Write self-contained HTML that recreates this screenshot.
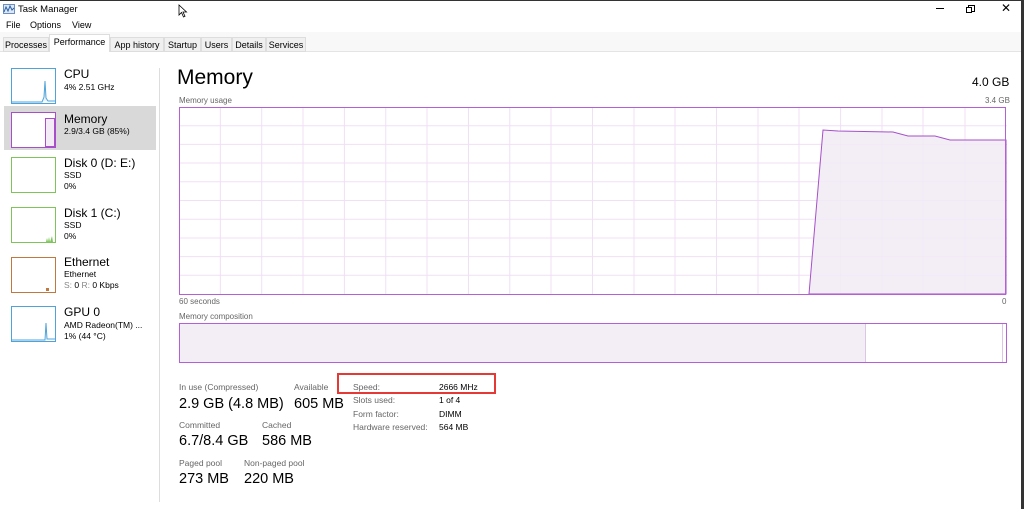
<!DOCTYPE html>
<html><head><meta charset="utf-8"><style>
*{margin:0;padding:0;box-sizing:border-box}
body{width:1024px;height:509px;background:#fff;font-family:"Liberation Sans",sans-serif;position:relative;overflow:hidden;color:#000}
.a{position:absolute;white-space:nowrap}
.tab{position:absolute;top:37px;height:15px;font-size:9px;padding-top:2px;text-align:center;background:#f0f0f0;border:1px solid #ddd;color:#000}
.box{position:absolute;left:11px;width:45px;height:36px;background:#fff}
.nm{position:absolute;left:64px;font-size:12px}
.sb{position:absolute;left:64px;font-size:8.5px;line-height:11px}
.lbl{font-size:8.5px;color:#666}
.big{font-size:14.5px}
</style></head><body>
<div class="a" style="left:0;top:0;width:1024px;height:1px;background:#333"></div>
<div class="a" style="left:1021px;top:0;width:3px;height:509px;background:#333"></div>
<svg class="a" style="left:3px;top:4px" width="12" height="10"><rect x="0.5" y="0.5" width="11" height="9" fill="#dde8f4" stroke="#6a8fc0"/><path d="M1 8 L3 3 L5 7 L7 2 L9 6 L11 4" stroke="#2a5fa8" fill="none"/></svg>
<div class="a" style="left:18px;top:4px;font-size:9.5px">Task Manager</div>
<svg class="a" style="left:178px;top:4px" width="10" height="14"><path d="M1 1 L1 11 L3.5 8.5 L5.5 13 L7 12.3 L5 8 L8.5 8 Z" fill="#fff" stroke="#000" stroke-width="0.8"/></svg>
<div class="a" style="left:936px;top:8px;width:8px;height:1px;background:#000"></div>
<div class="a" style="left:968px;top:5px;width:7px;height:7px;border:1px solid #000"></div>
<div class="a" style="left:966px;top:7px;width:6px;height:6px;border:1px solid #000;background:#fff"></div>
<div class="a" style="left:1001px;top:1px;font-size:12px">✕</div>
<div class="a" style="left:6px;top:20px;font-size:9px">File</div>
<div class="a" style="left:30px;top:20px;font-size:9px">Options</div>
<div class="a" style="left:72px;top:20px;font-size:9px">View</div>
<div class="a" style="left:0;top:32px;width:1021px;height:20px;background:#f8f8f8;border-bottom:1px solid #e4e4e4"></div>
<div class="tab" style="left:3px;width:46px">Processes</div>
<div class="tab" style="left:49px;top:34px;height:18px;width:61px;background:#fff;border-bottom:none">Performance</div>
<div class="tab" style="left:110px;width:54px">App history</div>
<div class="tab" style="left:164px;width:37px">Startup</div>
<div class="tab" style="left:201px;width:31px">Users</div>
<div class="tab" style="left:232px;width:34px">Details</div>
<div class="tab" style="left:266px;width:40px">Services</div>

<div class="a" style="left:159px;top:68px;width:1px;height:434px;background:#ddd"></div>
<div class="a" style="left:4px;top:106px;width:152px;height:44px;background:#d9d9d9"></div>

<div class="box" style="top:68px;border:1px solid #4fa3d8"><svg width="43" height="34"><path d="M0 33 L30 33 L32 28 L33 12 L34 29 L36 32 L43 32" stroke="#4fa3d8" fill="#e8f3fb"/></svg></div>
<div class="nm" style="top:67px">CPU</div><div class="sb" style="top:82px">4% 2.51 GHz</div>

<div class="box" style="top:112px;border:1px solid #a64fc9"><div style="position:absolute;left:33px;top:5px;width:10px;height:29px;border:1px solid #a64fc9;background:#f3ecf6"></div></div>
<div class="nm" style="top:112px">Memory</div><div class="sb" style="top:126px">2.9/3.4 GB (85%)</div>

<div class="box" style="top:157px;border:1px solid #7dc55a"></div>
<div class="nm" style="top:156px">Disk 0 (D: E:)</div><div class="sb" style="top:170px">SSD<br>0%</div>

<div class="box" style="top:207px;border:1px solid #7dc55a"><svg width="43" height="34"><path d="M34 34 L35 30 L36 34 L37 29 L38 34 L40 28 L41 34Z" fill="#7dc55a"/></svg></div>
<div class="nm" style="top:206px">Disk 1 (C:)</div><div class="sb" style="top:220px">SSD<br>0%</div>

<div class="box" style="top:257px;border:1px solid #c07840"><div style="position:absolute;left:34px;top:30px;width:3px;height:3px;background:#c07840"></div></div>
<div class="nm" style="top:255px">Ethernet</div><div class="sb" style="top:269px">Ethernet<br><span style="color:#888">S:</span> 0 <span style="color:#888">R:</span> 0 Kbps</div>

<div class="box" style="top:306px;border:1px solid #4fa3d8"><svg width="43" height="34"><path d="M0 33 L33 33 L34 16 L35 32 L43 32" stroke="#4fa3d8" fill="none"/></svg></div>
<div class="nm" style="top:305px">GPU 0</div><div class="sb" style="top:320px">AMD Radeon(TM) ...<br>1% (44 °C)</div>

<div class="a" style="left:177px;top:66px;font-size:21px">Memory</div>
<div class="a" style="left:972px;top:75px;font-size:12px">4.0 GB</div>
<div class="a lbl" style="left:179px;top:96px;font-size:8px">Memory usage</div>
<div class="a lbl" style="left:985px;top:96px;font-size:8px">3.4 GB</div>
<svg class="a" style="left:179px;top:107px" width="828" height="188">
<g stroke="#f0dff5" stroke-width="1">
<path d="M41.35 0V188M82.7 0V188M124 0V188M165.4 0V188M206.75 0V188M248 0V188M289.45 0V188M330.8 0V188M372 0V188M413.5 0V188M455 0V188M496 0V188M537.5 0V188M579 0V188M620 0V188M661.6 0V188M703 0V188M744 0V188M786 0V188"/>
<path d="M0 18.7H828M0 37.4H828M0 56H828M0 74.8H828M0 93.5H828M0 112.2H828M0 131H828M0 149.6H828M0 168.3H828"/>
</g>
<path d="M630 187 L644 23 L659 24 L714 25 L729 29 L756 29 L771 33 L827 33 L827 187Z" fill="#f1ebf4" fill-opacity="0.85" stroke="#a64fc9" stroke-width="1"/>
<rect x="0.5" y="0.5" width="826" height="187" fill="none" stroke="#b45fd6"/>
</svg>
<div class="a lbl" style="left:179px;top:297px;font-size:8px">60 seconds</div>
<div class="a lbl" style="left:1002px;top:297px;font-size:8px">0</div>
<div class="a lbl" style="left:179px;top:312px;font-size:8px">Memory composition</div>
<div class="a" style="left:179px;top:323px;width:828px;height:40px;border:1px solid #b45fd6;background:#fff">
<div style="position:absolute;left:0;top:0;width:686px;height:38px;background:#f3eef5;border-right:1px solid #dcc5e5"></div>
<div style="position:absolute;left:822px;top:0;width:1px;height:38px;background:#dcc5e5"></div>
</div>

<div class="a lbl" style="left:179px;top:382px">In use (Compressed)</div>
<div class="a big" style="left:179px;top:396px">2.9 GB (4.8 MB)</div>
<div class="a lbl" style="left:294px;top:382px">Available</div>
<div class="a big" style="left:294px;top:396px">605 MB</div>
<div class="a lbl" style="left:179px;top:420px">Committed</div>
<div class="a big" style="left:179px;top:433px">6.7/8.4 GB</div>
<div class="a lbl" style="left:262px;top:420px">Cached</div>
<div class="a big" style="left:262px;top:433px">586 MB</div>
<div class="a lbl" style="left:179px;top:458px">Paged pool</div>
<div class="a big" style="left:179px;top:471px">273 MB</div>
<div class="a lbl" style="left:244px;top:458px">Non-paged pool</div>
<div class="a big" style="left:244px;top:471px">220 MB</div>

<div class="a lbl" style="left:353px;top:381px;line-height:13.3px">Speed:<br>Slots used:<br>Form factor:<br>Hardware reserved:</div>
<div class="a" style="left:439px;top:381px;font-size:8.5px;line-height:13.3px">2666 MHz<br>1 of 4<br>DIMM<br>564 MB</div>
<div class="a" style="left:337px;top:373px;width:159px;height:21px;border:2px solid #e53935"></div>
</body></html>
